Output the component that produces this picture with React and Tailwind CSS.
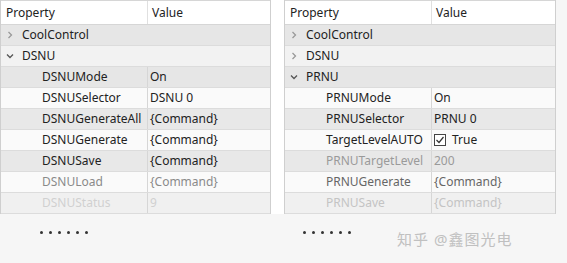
import React from 'react';

const leftRows = [
  { type: 'group', label: 'CoolControl', open: false, bg: 'bg-[#e6e6e6]' },
  { type: 'group', label: 'DSNU', open: true, bg: 'bg-[#f2f2f2]' },
  { label: 'DSNUMode', value: 'On', bg: 'bg-[#e6e6e6]' },
  { label: 'DSNUSelector', value: 'DSNU 0', bg: 'bg-[#fafafa]' },
  { label: 'DSNUGenerateAll', value: '{Command}', bg: 'bg-[#e8e8e8]' },
  { label: 'DSNUGenerate', value: '{Command}', bg: 'bg-[#fafafa]' },
  { label: 'DSNUSave', value: '{Command}', bg: 'bg-[#e8e8e8]' },
  { label: 'DSNULoad', value: '{Command}', bg: 'bg-[#fafafa]', text: 'text-[#8a8a8a]' },
  { label: 'DSNUStatus', value: '9', bg: 'bg-[#f0f0f0]', text: 'text-[#d0d0d0]' }
];

const rightRows = [
  { type: 'group', label: 'CoolControl', open: false, bg: 'bg-[#e6e6e6]' },
  { type: 'group', label: 'DSNU', open: false, bg: 'bg-[#f2f2f2]' },
  { type: 'group', label: 'PRNU', open: true, bg: 'bg-[#e6e6e6]' },
  { label: 'PRNUMode', value: 'On', bg: 'bg-[#fafafa]' },
  { label: 'PRNUSelector', value: 'PRNU 0', bg: 'bg-[#e8e8e8]' },
  { label: 'TargetLevelAUTO', value: 'True', check: true, bg: 'bg-[#fafafa]' },
  { label: 'PRNUTargetLevel', value: '200', bg: 'bg-[#e8e8e8]', text: 'text-[#9a9a9a]' },
  { label: 'PRNUGenerate', value: '{Command}', bg: 'bg-[#fafafa]', text: 'text-[#666]' },
  { label: 'PRNUSave', value: '{Command}', bg: 'bg-[#f0f0f0]', text: 'text-[#c4c4c4]' }
];

const Arrow = ({ open }) => (
  <svg width="8" height="8" viewBox="0 0 8 8" className="shrink-0">
    {open ? (
      <path d="M1 2.5 L4 5.5 L7 2.5" fill="none" stroke="#555" strokeWidth="1.3" />
    ) : (
      <path d="M2.5 1 L5.5 4 L2.5 7" fill="none" stroke="#999" strokeWidth="1.3" />
    )}
  </svg>
);

const Check = () => (
  <span className="w-[12px] h-[12px] border border-[#444] bg-white flex items-center justify-center mr-[6px]">
    <svg width="10" height="10" viewBox="0 0 10 10">
      <path d="M1.5 5 L4 7.5 L8.5 2" fill="none" stroke="#333" strokeWidth="1.2" />
    </svg>
  </span>
);

const Dots = () => (
  <div className="flex gap-[6px]">
    {[0, 1, 2, 3, 4, 5].map((i) => (
      <span key={i} className="w-[3px] h-[3px] rounded-full bg-[#333]" />
    ))}
  </div>
);

const Panel = ({ rows, col, width }) => (
  <div className={`${width} bg-white border-l border-r border-[#cfcfcf] flex flex-col`}>
    <div className={`grid ${col} h-[25px] border-b border-t border-[#d6d6d6] text-[#222]`}>
      <div className="pl-[5px] flex items-center border-r border-[#e0e0e0]">Property</div>
      <div className="pl-[4px] flex items-center">Value</div>
    </div>
    {rows.map((r) =>
      r.type === 'group' ? (
        <div key={r.label} className={`${r.bg} h-[21px] border-b border-[#dcdcdc] flex items-center pl-[5px] gap-[8px] text-[#222]`}>
          <Arrow open={r.open} />
          <span>{r.label}</span>
        </div>
      ) : (
        <div key={r.label} className={`${r.bg} grid ${col} h-[21px] border-b border-[#dcdcdc] ${r.text || 'text-[#222]'}`}>
          <div className="pl-[41px] flex items-center border-r border-[#d6d6d6] whitespace-nowrap overflow-hidden">{r.label}</div>
          <div className="pl-[2px] flex items-center whitespace-nowrap">
            {r.check && <Check />}
            {r.value}
          </div>
        </div>
      )
    )}
  </div>
);

export default function App() {
  return (
    <div className="w-[567px] h-[263px] bg-[#f6f6f6] text-[12px] overflow-hidden" style={{ fontFamily: '"Noto Sans", "Noto Sans CJK SC", sans-serif' }}>
      <div className="flex items-start bg-[#f6f6f6]">
        <Panel rows={leftRows} col="grid-cols-[147px_1fr]" width="w-[271px]" />
        <div className="w-[13px] h-[214px] bg-white" />
        <Panel rows={rightRows} col="grid-cols-[147px_1fr]" width="w-[272px]" />
      </div>
      <div className="flex items-start h-[49px] pt-[17px]">
        <div className="pl-[40px] w-[303px]">
          <Dots />
        </div>
        <Dots />
        <div className="ml-[46px] mt-[1px] text-[#c0c0c0] text-[15px] tracking-[1px] leading-none">知乎 @鑫图光电</div>
      </div>
    </div>
  );
}
